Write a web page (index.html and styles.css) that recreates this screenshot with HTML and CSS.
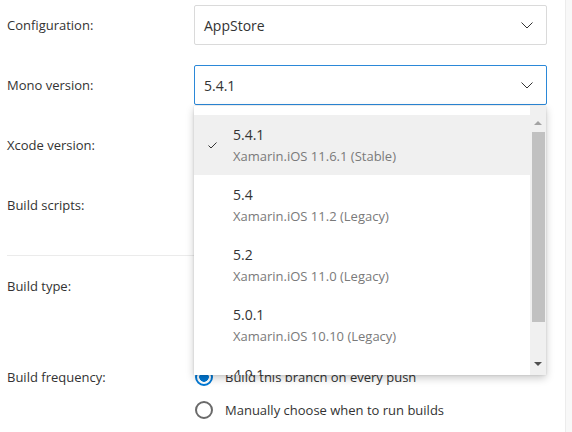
FILE: index.html
```html
<!DOCTYPE html>
<html>
<head>
<meta charset="utf-8">
<link rel="stylesheet" href="styles.css">
</head>
<body>
<div class="panel">
  <div class="row">
    <div class="label">Configuration:</div>
    <div class="select">
      <span class="value">AppStore</span>
      <svg class="chev" width="12" height="7" viewBox="0 0 12 7"><path d="M0.5 0.5 L6 6 L11.5 0.5" fill="none" stroke="#333" stroke-width="1"/></svg>
    </div>
  </div>
  <div class="row">
    <div class="label">Mono version:</div>
    <div class="select focused">
      <span class="value">5.4.1</span>
      <svg class="chev" width="12" height="7" viewBox="0 0 12 7"><path d="M0.5 0.5 L6 6 L11.5 0.5" fill="none" stroke="#333" stroke-width="1"/></svg>
    </div>
  </div>
  <div class="row">
    <div class="label">Xcode version:</div>
    <div class="control"></div>
  </div>
  <div class="row">
    <div class="label">Build scripts:</div>
    <div class="control"></div>
  </div>
  <div class="sep"></div>
  <div class="row tall">
    <div class="label">Build type:</div>
    <div class="control"></div>
  </div>
  <div class="freq">
    <div class="label">Build frequency:</div>
    <div class="radios">
      <div class="radio"><span class="circle on"></span><span>Build this branch on every push</span></div>
      <div class="radio"><span class="circle"></span><span>Manually choose when to run builds</span></div>
    </div>
  </div>

  <div class="dropdown">
    <div class="list">
      <div class="item active">
        <svg class="check" width="9" height="7" viewBox="0 0 9 7"><path d="M0.5 3.5 L3 6 L8.5 0.5" fill="none" stroke="#333" stroke-width="1"/></svg>
        <div class="main">5.4.1</div>
        <div class="sub">Xamarin.iOS 11.6.1 (Stable)</div>
      </div>
      <div class="item">
        <div class="main">5.4</div>
        <div class="sub">Xamarin.iOS 11.2 (Legacy)</div>
      </div>
      <div class="item">
        <div class="main">5.2</div>
        <div class="sub">Xamarin.iOS 11.0 (Legacy)</div>
      </div>
      <div class="item">
        <div class="main">5.0.1</div>
        <div class="sub">Xamarin.iOS 10.10 (Legacy)</div>
      </div>
      <div class="item">
        <div class="main">4.9.1</div>
        <div class="sub">Xamarin.iOS 10.8 (Legacy)</div>
      </div>
    </div>
    <div class="scrollbar">
      <div class="arrow up"></div>
      <div class="thumb"></div>
      <div class="arrow down"></div>
    </div>
  </div>
</div>
</body>
</html>
```

FILE: styles.css
```css
html, body {
  margin: 0;
  padding: 0;
  background: #f8f8f8;
  font-family: "Open Sans", "Noto Sans", sans-serif;
  color: #333333;
}
.panel {
  position: relative;
  width: 566px;
  height: 432px;
  background: #ffffff;
  border-right: 1px solid #ececec;
  padding-top: 5px;
  box-sizing: border-box;
  overflow: hidden;
}
.row {
  display: flex;
  align-items: flex-start;
  height: 60px;
}
.label {
  width: 187px;
  padding-left: 7px;
  font-size: 13px;
  line-height: 40px;
  flex: none;
}
.select {
  width: 353px;
  height: 40px;
  box-sizing: border-box;
  border: 1px solid #dadada;
  border-radius: 2px;
  display: flex;
  align-items: center;
  justify-content: space-between;
  padding: 0 13px 0 9px;
  font-size: 14px;
}
.select.focused {
  border-color: #2b88d8;
}
.chev { display: block; }
.control { width: 352px; height: 40px; }
.sep {
  height: 1px;
  background: #ebebeb;
  margin: 10px 0 0 7px;
  width: 520px;
}
.row.tall {
  height: 100px;
  margin-top: 10px;
}
.freq {
  display: flex;
  margin-top: 1px;
}
.freq .label { line-height: 20px; }
.radios {
  display: flex;
  flex-direction: column;
  gap: 13px;
}
.radio {
  display: flex;
  align-items: center;
  gap: 12px;
  font-size: 13px;
  height: 20px;
  margin-left: 1px;
}
.circle {
  width: 18px;
  height: 18px;
  box-sizing: border-box;
  border: 2px solid #6a6a6a;
  border-radius: 50%;
  flex: none;
}
.circle.on {
  border-color: #0078d4;
  background: radial-gradient(circle, #0078d4 0 4.5px, #ffffff 5px);
}
.dropdown {
  position: absolute;
  left: 194px;
  top: 106px;
  width: 352px;
  height: 269px;
  background: #ffffff;
  box-shadow: 0 3px 8px rgba(0,0,0,0.22), 0 0 2px rgba(0,0,0,0.12);
  display: flex;
  overflow: hidden;
}
.list {
  width: 336px;
  padding-top: 9px;
}
.item {
  position: relative;
  height: 60px;
  box-sizing: border-box;
  padding: 10px 0 0 39px;
}
.item.active { background: #f0f0f0; }
.check {
  position: absolute;
  left: 14px;
  top: 27px;
}
.main {
  font-size: 14px;
  line-height: 20px;
  color: #333;
}
.sub {
  font-size: 13px;
  line-height: 22px;
  color: #7a7a7a;
}
.scrollbar {
  width: 16px;
  background: #f0f0f0;
  display: flex;
  flex-direction: column;
  align-items: center;
}
.arrow {
  width: 0;
  height: 0;
  border-left: 4px solid transparent;
  border-right: 4px solid transparent;
}
.arrow.up {
  border-bottom: 4px solid #a3a3a3;
  margin-top: 15px;
}
.thumb {
  width: 13px;
  height: 190px;
  background: #c1c1c1;
  margin-top: 7px;
}
.arrow.down {
  border-top: 4px solid #505050;
  margin-top: 40px;
}
```
